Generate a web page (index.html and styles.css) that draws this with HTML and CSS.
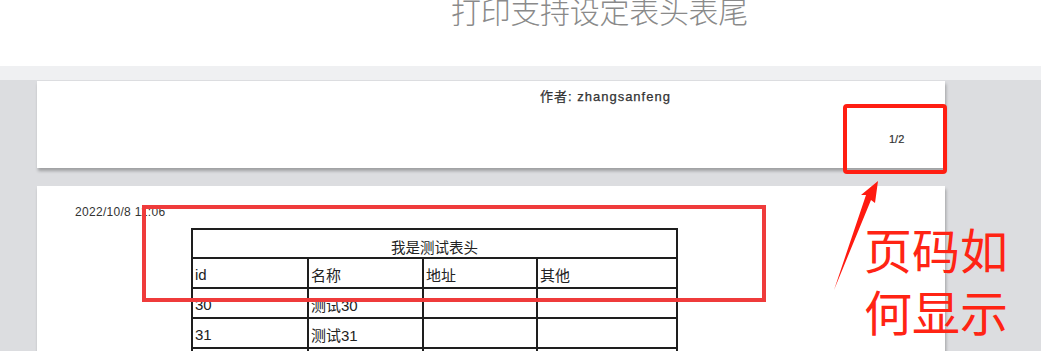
FILE: index.html
```html
<!DOCTYPE html>
<html lang="zh-CN">
<head>
<meta charset="utf-8">
<link rel="stylesheet" href="styles.css">
</head>
<body>
<header class="top">
  <h1 class="title">打印支持设定表头表尾</h1>
</header>
<div class="strip"></div>
<main class="viewer">
  <section class="page page-one">
    <div class="author">作者: zhangsanfeng</div>
    <div class="pageno">1/2</div>
  </section>
  <section class="page page-two">
    <div class="date">2022/10/8 11:06</div>
    <table class="grid">
      <tr><th colspan="4" class="caption">我是测试表头</th></tr>
      <tr><td class="c1">id</td><td class="c2">名称</td><td class="c3">地址</td><td class="c4">其他</td></tr>
      <tr><td>30</td><td>测试30</td><td></td><td></td></tr>
      <tr><td>31</td><td>测试31</td><td></td><td></td></tr>
      <tr><td>32</td><td>测试32</td><td></td><td></td></tr>
    </table>
  </section>
</main>
<div class="mark mark-page"></div>
<div class="mark mark-head"></div>
<svg class="arrow" width="60" height="120" viewBox="820 175 60 120">
  <polygon points="878,181 861,195 866,195 834,290 871,200 875,203" fill="#ff1a10"/>
</svg>
<div class="note">页码如<br>何显示</div>
</body>
</html>
```
FILE: styles.css
```css
html, body {
  margin: 0;
  padding: 0;
}
body {
  width: 1041px;
  height: 351px;
  overflow: hidden;
  position: relative;
  background: #fff;
  font-family: "Liberation Sans", "Noto Sans CJK SC", sans-serif;
}
.top {
  display: flow-root;
  height: 66px;
  background: #fff;
  padding-left: 451px;
  box-sizing: border-box;
}
.title {
  margin: -10px 0 0 0;
  font-family: "Noto Sans CJK SC", sans-serif;
  font-weight: 300;
  font-size: 30px;
  line-height: 40px;
  color: #8a8a8a;
  letter-spacing: -0.3px;
}
.strip {
  height: 14px;
  background: #eff0f2;
}
.viewer {
  background: #dcdde0;
  padding: 1px 0 0 37px;
  height: 271px;
  overflow: hidden;
  box-sizing: border-box;
}
.page {
  width: 908px;
  background: #fff;
  box-shadow: 1px 3px 3px rgba(0,0,0,0.28);
  position: relative;
  box-sizing: border-box;
}
.page-one {
  height: 87px;
  padding: 8px 0 0 503px;
}
.author {
  font-family: "Liberation Sans", "Noto Sans CJK SC", sans-serif;
  font-size: 13px;
  line-height: 15px;
  letter-spacing: 1px;
  color: #333;
  -webkit-text-stroke: 0.25px #333;
}
.pageno {
  margin: 29px 0 0 349px;
  font-size: 11px;
  line-height: 13px;
  color: #333;
  -webkit-text-stroke: 0.2px #333;
}
.page-two {
  margin-top: 18px;
  height: 200px;
  padding: 20px 0 0 38px;
}
.date {
  font-size: 12px;
  line-height: 13px;
  letter-spacing: 0.3px;
  color: #333;
}
.grid {
  margin: 9px 0 0 116px;
  border-collapse: collapse;
  font-family: "Liberation Sans", "Noto Sans CJK SC", sans-serif;
  font-size: 15px;
  color: #222;
}
.grid th, .grid td {
  border: 2px solid #1e1e1e;
  padding: 2px 0 0 2px;
  text-align: left;
  font-weight: normal;
  height: 30px;
  box-sizing: border-box;
}
.grid th.caption {
  text-align: center;
  padding: 5px 0 0 0;
  height: 29px;
  font-size: 14.5px;
}
.c1 { width: 116px; }
.c2 { width: 115px; }
.c3 { width: 114px; }
.c4 { width: 140px; }
.mark {
  position: absolute;
  box-sizing: border-box;
}
.mark-page {
  left: 843px;
  top: 104px;
  width: 104px;
  height: 70px;
  border: 4px solid #ff1e12;
  border-radius: 4px;
}
.mark-head {
  left: 142px;
  top: 205px;
  width: 624px;
  height: 97px;
  border: 4px solid #ef3b3b;
}
.arrow {
  position: absolute;
  left: 820px;
  top: 175px;
}
.note {
  position: absolute;
  left: 864px;
  top: 217px;
  font-family: "Noto Sans CJK SC", sans-serif;
  font-weight: 400;
  font-size: 48px;
  line-height: 62px;
  color: #ff2414;
}
```
